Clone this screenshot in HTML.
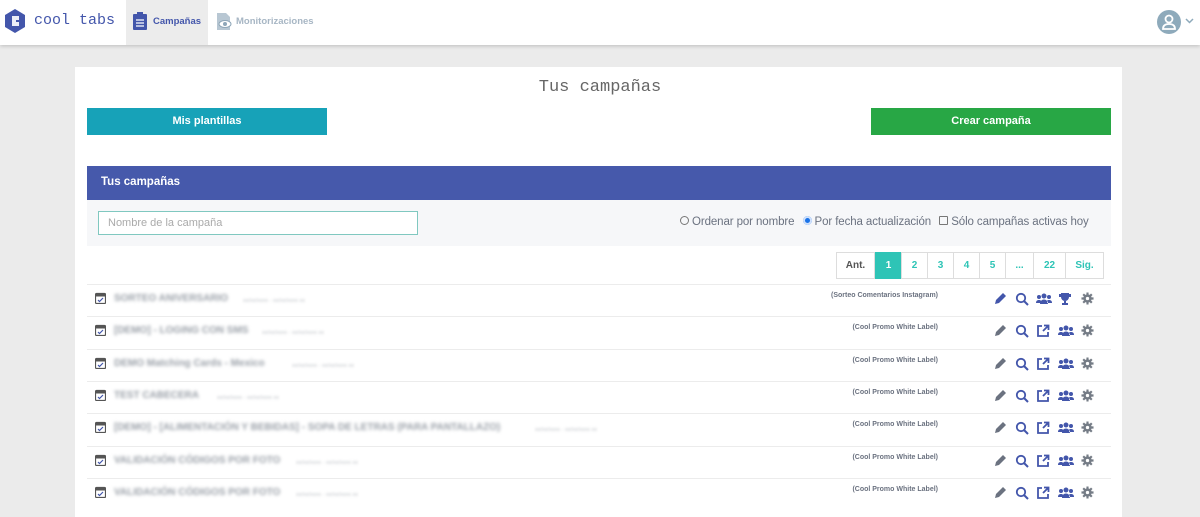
<!DOCTYPE html>
<html><head><meta charset="utf-8"><style>
*{box-sizing:border-box;margin:0;padding:0}
body{width:1200px;height:509px;overflow:hidden;background:#ebebeb;font-family:"Liberation Sans",sans-serif;position:relative}
.nav{position:absolute;left:0;top:0;width:1200px;height:45px;background:#fff;box-shadow:0 1px 4px rgba(0,0,0,.2)}
.card{position:absolute;left:75px;top:67px;width:1047px;height:450px;background:#fff}
.abs{position:absolute}
.btn{position:absolute;height:27px;color:#fff;font-weight:bold;font-size:11px;text-align:center;line-height:27px}
.row{position:absolute;left:87px;width:1024px;height:32px;border-top:1px solid #ececec}
.blur{position:absolute;filter:blur(1.5px);color:#9aa0a8;font-size:10px;font-weight:bold;white-space:nowrap}
.blur2{position:absolute;filter:blur(1.3px);color:#c0c4c9;font-size:5.5px;white-space:nowrap}
.type{position:absolute;right:262px;font-size:7px;color:#6b7280;font-weight:bold;white-space:nowrap}
.pg{position:absolute;top:252px;height:27px;border:1px solid #ddd;font-size:10px;color:#2ec4b6;text-align:center;line-height:25px;font-weight:bold}
</style></head><body>
<div class="nav">
 <svg class="abs" style="left:4px;top:9px" width="22" height="24" viewBox="0 0 22 24"><path d="M11 0L21 6V18L11 24L1 18V6Z" fill="#4356ab"/><path d="M8 7h7v4h-3v2h3v4H8z" fill="#fff" opacity=".9"/></svg>
 <div class="abs" style="left:34px;top:12px;font-family:'Liberation Mono',monospace;font-size:15px;color:#4356ab">cool tabs</div>
 <div class="abs" style="left:126px;top:0;width:82px;height:45px;background:#ececec"></div>
 <svg class="abs" style="left:133px;top:12px" width="14" height="18" viewBox="0 0 14 18"><rect x="0" y="2" width="14" height="16" rx="1" fill="#4356ab"/><rect x="4" y="0" width="6" height="4" fill="#4356ab"/><path d="M3 8h8M3 11h8M3 14h8" stroke="#fff" stroke-width="1.3"/></svg>
 <div class="abs" style="left:153px;top:16px;font-size:9.5px;font-weight:bold;color:#4356ab">Campañas</div>
 <svg class="abs" style="left:216px;top:13px" width="16" height="17" viewBox="0 0 16 17"><path d="M1 0h9l4 4v13H1z" fill="#b8c7d3"/><ellipse cx="9" cy="11" rx="6" ry="3.5" fill="#fff" stroke="#8ea6b8"/><circle cx="9" cy="11" r="2" fill="#8ea6b8"/></svg>
 <div class="abs" style="left:236px;top:16px;font-size:9.5px;font-weight:bold;color:#a7b6c4">Monitorizaciones</div>
 <svg class="abs" style="left:1157px;top:10px" width="24" height="24" viewBox="0 0 24 24"><circle cx="12" cy="12" r="12" fill="#8eaabb"/><circle cx="12" cy="9" r="3.5" fill="none" stroke="#fff" stroke-width="1.8"/><path d="M6 19c0-4 3-5 6-5s6 1 6 5z" fill="none" stroke="#fff" stroke-width="1.8"/></svg>
 <svg class="abs" style="left:1185px;top:18px" width="9" height="6"><path d="M1 1l3.5 3.5L8 1" stroke="#8eaabb" stroke-width="1.5" fill="none"/></svg>
</div>
<div class="card"></div>
<div class="abs" style="left:0;width:1200px;top:78px;text-align:center;font-family:'Liberation Mono',monospace;font-size:17px;color:#666">Tus campañas</div>
<div class="btn" style="left:87px;top:108px;width:240px;background:#17a2b8">Mis plantillas</div>
<div class="btn" style="left:871px;top:108px;width:240px;background:#28a745">Crear campaña</div>
<div class="abs" style="left:87px;top:166px;width:1024px;height:34px;background:#4659ab;color:#fff;font-weight:bold;font-size:11.5px;line-height:32px;padding-left:14px">Tus campañas</div>
<div class="abs" style="left:87px;top:200px;width:1024px;height:46px;background:#f6f7f9"></div>
<div class="abs" style="left:98px;top:211px;width:320px;height:24px;border:1px solid #80c8c0;background:#fff;font-size:11px;color:#aaa;line-height:22px;padding-left:9px">Nombre de la campaña</div>
<div class="abs" style="left:680px;top:216px;font-size:11.5px;color:#6b7280;white-space:nowrap;letter-spacing:-0.1px">
<span style="display:inline-block;width:9px;height:9px;border:1px solid #777;border-radius:50%;margin-right:3px"></span>Ordenar por nombre
<span style="display:inline-block;width:9px;height:9px;border-radius:50%;background:#1a73e8;box-shadow:inset 0 0 0 2px #cfe0fb;margin:0 3px 0 5px"></span>Por fecha actualización
<span style="display:inline-block;width:9px;height:9px;border:1px solid #777;border-radius:1px;margin:0 3px 0 5px"></span>Sólo campañas activas hoy</div>
<div class="pg" style="left:836px;width:39px;color:#555">Ant.</div>
<div class="pg" style="left:875px;width:27px;background:#2ec4b6;color:#fff;border-color:#2ec4b6">1</div>
<div class="pg" style="left:901px;width:27px">2</div>
<div class="pg" style="left:927px;width:27px">3</div>
<div class="pg" style="left:953px;width:27px">4</div>
<div class="pg" style="left:979px;width:27px">5</div>
<div class="pg" style="left:1005px;width:29px">...</div>
<div class="pg" style="left:1033px;width:33px">22</div>
<div class="pg" style="left:1065px;width:39px">Sig.</div>
<div id="rows"></div>
<script>
var names=[["SORTEO ANIVERSARIO",121],["[DEMO] - LOGING CON SMS",140],["DEMO Matching Cards - Mexico",170],["TEST CABECERA",95],["[DEMO] - [ALIMENTACIÓN Y BEBIDAS] - SOPA DE LETRAS (PARA PANTALLAZO)",413],["VALIDACIÓN CÓDIGOS POR FOTO",174],["VALIDACIÓN CÓDIGOS POR FOTO",174]];
var tops=[284,316,349,381,413,446,478],h="";
var pencil='<svg width="14" height="14" viewBox="0 0 14 14"><path d="M2 12l1-4 7-7 3 3-7 7z" fill="COL"/></svg>';
var mag='<svg width="14" height="14" viewBox="0 0 14 14"><circle cx="6" cy="6" r="4.2" fill="none" stroke="#4356ab" stroke-width="1.8"/><path d="M9 9l4 4" stroke="#4356ab" stroke-width="2"/></svg>';
var ext='<svg width="14" height="14" viewBox="0 0 14 14"><path d="M6 2H2v10h10V8" fill="none" stroke="#4356ab" stroke-width="1.8"/><path d="M7 7l5-5M8 1.5h4.5V6" fill="none" stroke="#4356ab" stroke-width="1.8"/></svg>';
var ppl='<svg width="16" height="14" viewBox="0 0 16 14"><circle cx="8" cy="4" r="2.5" fill="#4356ab"/><circle cx="3" cy="5" r="2" fill="#4356ab"/><circle cx="13" cy="5" r="2" fill="#4356ab"/><path d="M4 12c0-3 2-4.5 4-4.5s4 1.5 4 4.5zM0 11c0-2 1-3 3-3s2 1 2 1v2zM16 11c0-2-1-3-3-3s-2 1-2 1v2z" fill="#4356ab"/></svg>';
var tro='<svg width="14" height="14" viewBox="0 0 14 14"><path d="M3 1h8v4a4 4 0 0 1-8 0zM1 2h2v3H1zM11 2h2v3h-2zM6 9h2v2h2v2H4v-2h2z" fill="#4356ab"/></svg>';
var gear='<svg width="13" height="13" viewBox="0 0 14 14"><circle cx="7" cy="7" r="4.5" fill="#757c86"/><path d="M7 0.5v13M0.5 7h13M2.4 2.4l9.2 9.2M11.6 2.4L2.4 11.6" stroke="#757c86" stroke-width="2.3"/><circle cx="7" cy="7" r="1.8" fill="#fff"/></svg>';
tops.forEach(function(t,i){
 var c=t+15;
 h+='<div class="row" style="top:'+t+'px"></div>';
 h+='<svg class="abs" style="left:95px;top:'+(c-7)+'px" width="11" height="12" viewBox="0 0 11 12"><rect x="0.5" y="1.5" width="10" height="10" rx="1" fill="none" stroke="#555" stroke-width="1.2"/><rect x="0.5" y="1.5" width="10" height="3" fill="#555"/><path d="M3 8l1.5 1.5L8 6" stroke="#4356ab" fill="none" stroke-width="1.2"/></svg>';
 var n=names[i][0],w=names[i][1];
 h+='<div class="blur" style="left:114px;top:'+(c-6)+'px;width:'+w+'px;overflow:visible">'+n+'</div>';
 h+='<div class="blur2" style="left:'+(122+w)+'px;top:'+(c-1)+'px">xx/xx/xxxx - xx/xx/xxxx xx</div>';
 var ty=i==0?'(Sorteo Comentarios Instagram)':'(Cool Promo White Label)';
 h+='<div class="type" style="top:'+(c-7)+'px">'+ty+'</div>';
 var icons=i==0?[pencil.replace('COL','#4356ab'),mag,ppl,tro,gear]:[pencil.replace('COL','#6b7280'),mag,ext,ppl,gear];
 var xs=[993,1015,1036,1058,1081];
 icons.forEach(function(s,j){h+='<div class="abs" style="left:'+xs[j]+'px;top:'+(c-7)+'px">'+s+'</div>';});
});
document.getElementById('rows').innerHTML=h;
</script>
</body></html>
